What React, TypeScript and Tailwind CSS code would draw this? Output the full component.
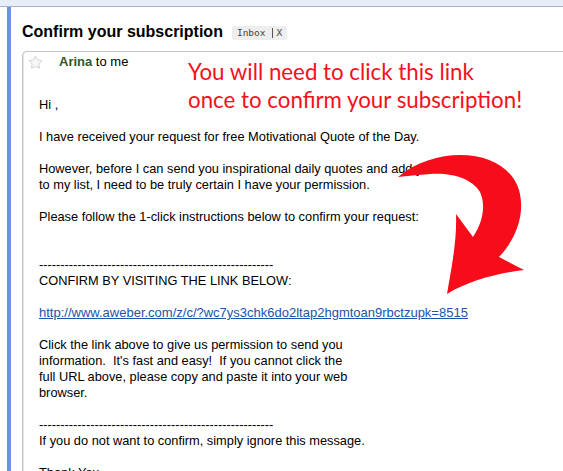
import React from "react";
import { Star } from "lucide-react";

const DASHES = "-".repeat(55);

function Line({ children }: { children?: React.ReactNode }) {
  return <div className="h-[16px] leading-[16px] whitespace-pre">{children ?? " "}</div>;
}

export default function App() {
  return (
    <div className="relative w-[563px] h-[471px] overflow-hidden bg-white font-['Liberation_Sans',Arial,sans-serif] text-black">
      <div className="h-[7px] bg-[#e8eef7] border-b border-[#aab5c6]" />
      <div className="flex h-[464px]">
        <div className="ml-[7px] w-[4px] bg-[#6b95e3]" />
        <div className="flex-1 pl-[11px]">
          <div className="mt-[14px] flex items-center h-[21px]">
            <div className="text-[16px] leading-[21px] font-bold">Confirm your subscription</div>
            <div className="ml-[9px] mt-[3px] flex items-center h-[14px] px-[5px] bg-[#eeeeee] rounded-[2px] text-[#444] font-['DejaVu_Sans_Mono',monospace] text-[9.5px] leading-[14px]">
              <span>Inbox</span>
              <span className="ml-[6px] h-[10px] border-l border-[#555]" />
              <span className="ml-[4px]">X</span>
            </div>
          </div>
          <div className="mt-[9px] h-[500px] border-t border-l border-[#c4c4c4] rounded-tl-[5px] shadow-[inset_1px_0_0_#e6e6e6]">
            <div className="flex items-start pt-[2px] h-[18px]">
              <Star size={15} strokeWidth={1.3} color="#c8c8c8" fill="#f7f7f7" className="ml-[5px] mt-[1px]" />
              <div className="ml-[16px] text-[13px] leading-[16px]">
                <span className="font-bold text-[#2b5a2b]">Arina</span> to me
              </div>
            </div>
            <div className="mt-[27px] pl-[16px] text-[12.8px]">
              <Line>Hi ,</Line>
              <Line />
              <Line>I have received your request for free Motivational Quote of the Day.</Line>
              <Line />
              <Line>However, before I can send you inspirational daily quotes and add you</Line>
              <Line>to my list, I need to be truly certain I have your permission.</Line>
              <Line />
              <Line>Please follow the 1-click instructions below to confirm your request:</Line>
              <Line />
              <Line />
              <Line>{DASHES}</Line>
              <Line>CONFIRM BY VISITING THE LINK BELOW:</Line>
              <Line />
              <Line>
                <a href="#" className="text-[13px] text-[#2052ad] underline">
                  http://www.aweber.com/z/c/?wc7ys3chk6do2ltap2hgmtoan9rbctzupk=8515
                </a>
              </Line>
              <Line />
              <Line>Click the link above to give us permission to send you</Line>
              <Line>information.  It's fast and easy!  If you cannot click the</Line>
              <Line>full URL above, please copy and paste it into your web</Line>
              <Line>browser.</Line>
              <Line />
              <Line>{DASHES}</Line>
              <Line>If you do not want to confirm, simply ignore this message.</Line>
              <Line />
              <Line>Thank You</Line>
            </div>
          </div>
        </div>
      </div>

      <div className="absolute left-[188px] top-[58px] text-[#f5101a] font-['Lato',sans-serif] text-[22.3px] leading-[28px] whitespace-pre">
        <div>You will need to click this link</div>
        <div>once to confirm your subscription!</div>
      </div>

      <svg className="absolute left-0 top-0 pointer-events-none" width="563" height="471" viewBox="0 0 563 471">
        <path
          d="M398,177 C415,162 440,155 460,155 C490,155 512,168 519,190 C526,215 515,240 499,257 L524,270 C500,273 470,280 447,294 C452,265 457,240 456,214 L473,237 C483,222 486,205 480,192 C472,178 450,172 430,174 C418,175 405,176 398,177 Z"
          fill="#f70c1a"
        />
      </svg>
    </div>
  );
}
